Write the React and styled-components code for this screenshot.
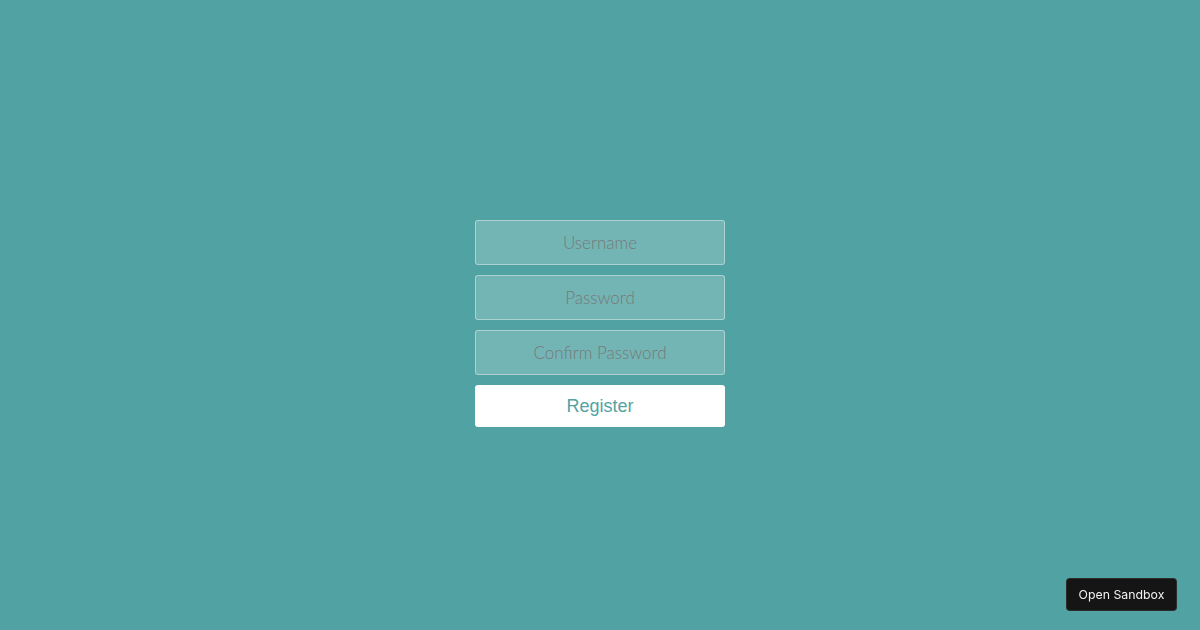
import React from 'react';
import styled, { createGlobalStyle } from 'styled-components';

const GlobalStyle = createGlobalStyle`
  html, body {
    margin: 0;
    padding: 0;
    height: 100%;
  }

  body {
    background: #50a3a2;
    font-family: 'Lato', 'Liberation Sans', sans-serif;
    font-weight: 300;
  }
`;

const Page = styled.div`
  height: 630px;
  box-sizing: border-box;
  padding-top: 220px;
  display: flex;
  justify-content: center;
`;

const StyledForm = styled.form`
  width: 250px;
  display: flex;
  flex-direction: column;
  gap: 10px;
`;

const StyledInput = styled.input`
  box-sizing: border-box;
  width: 250px;
  height: 45px;
  margin: 0;
  padding: 10px 15px;
  border: 1px solid rgba(255, 255, 255, 0.4);
  border-radius: 3px;
  background-color: rgba(255, 255, 255, 0.2);
  text-align: center;
  font-family: 'Lato', 'Liberation Sans', sans-serif;
  font-size: 17px;
  font-weight: 300;
  color: white;
  outline: none;

  &::placeholder {
    color: #787878;
  }
`;

const StyledSubmit = styled.button`
  box-sizing: border-box;
  width: 250px;
  height: 42px;
  margin: 0;
  padding: 0;
  border: none;
  border-radius: 3px;
  background-color: white;
  color: #53a3a2;
  font-family: 'Liberation Sans', Arial, sans-serif;
  font-size: 18px;
  cursor: pointer;
`;

const SandboxBtn = styled.button`
  position: fixed;
  right: 23px;
  bottom: 19px;
  box-sizing: border-box;
  width: 111px;
  height: 33px;
  padding: 0;
  border: 1px solid rgba(255, 255, 255, 0.1);
  border-radius: 4px;
  background-color: #151515;
  color: #f2f2f2;
  font-family: 'Inter', 'Liberation Sans', sans-serif;
  font-size: 12.3px;
  font-weight: 400;
`;

const App = () => {
  return (
    <>
      <GlobalStyle />
      <Page>
        <StyledForm onSubmit={(e) => e.preventDefault()}>
          <StyledInput type='text' placeholder='Username' />
          <StyledInput type='password' placeholder='Password' />
          <StyledInput type='password' placeholder='Confirm Password' />
          <StyledSubmit type='submit'>Register</StyledSubmit>
        </StyledForm>
      </Page>
      <SandboxBtn type='button'>Open Sandbox</SandboxBtn>
    </>
  );
};

export default App;
